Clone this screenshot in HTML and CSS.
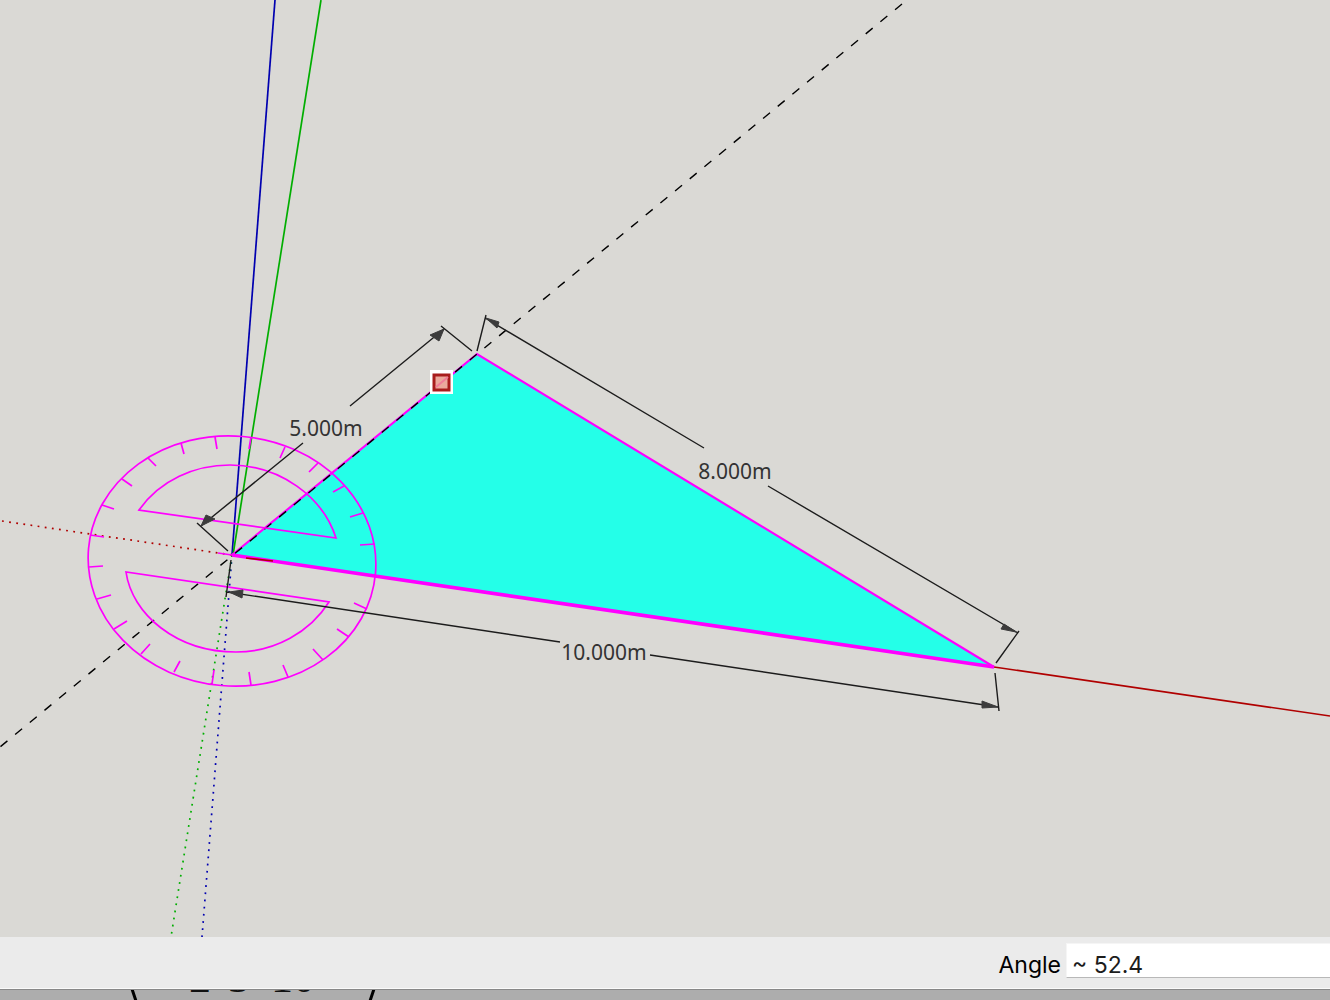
FILE: index.html
```
<!DOCTYPE html>
<html lang="en">
<head>
  <meta charset="UTF-8">
  <meta name="viewport" content="width=device-width, initial-scale=1.0">
  <title>Triangle</title>
  <link rel="stylesheet" href="styles.css">
</head>
<body>
  <main class="viewport">
    <svg class="scene" viewBox="0 0 1330 937" preserveAspectRatio="xMinYMin slice" role="img" aria-label="Triangle with sides 5, 8 and 10 metres">
      <!-- face -->
      <path class="face" d="M232 555L477 354L994 667Z"/>

      <!-- axes -->
      <path class="axis blue" d="M275 0L232 555"/>
      <path class="axis green" d="M321 0L233 555"/>
      <path class="axis red" d="M994 667L1330 716"/>
      <path class="axis blue dotted" d="M232 555L202 937"/>
      <path class="axis green dotted" d="M232 555L171 937"/>
      <path class="axis red dotted" d="M2 521L232 555"/>

      <!-- edges -->
      <path class="edge" d="M232 555L477 354L994 667"/>
      <path class="edge thick" d="M232 555L994 667"/>
      <path class="axis red" d="M246 558L273 561"/>
      <path class="guide" d="M902 4L0 747"/>

      <!-- protractor -->
      <g class="protractor">
        <ellipse cx="232" cy="561" rx="144" ry="125" transform="rotate(5 232 561)"/>
        <path d="M139 510C160 480 195 465 230 465C280 465 323 497 336 538Z"/>
        <path d="M126 572C132 614 176 652 236 652C275 652 310 632 329 602Z"/>
        <path d="M215 437L217 449M181 443L184 454M148 458L156 466M122 479L132 486M102 505L114 509M90 535L104 537M89 567L103 566M97 599L111 595M114 629L127 621M141 654L150 644M174 672L180 661M212 684L214 670M251 685L249 672M288 677L283 665M323 660L313 649M349 637L337 629M367 609L354 603M375 544L360 545M363 513L350 517M344 486L333 492M318 463L309 472M285 447L280 458M251 437L249 449"/>
        <path d="M218 553L232 555"/>
      </g>

      <!-- dimensions -->
      <g class="dimension">
        <path d="M472 351L441 326M444 329L350 406M303 443L201 526M197 523L228 551"/>
        <path d="M477 351L486 315M485 318L704 448M768 486L1018 633M1019 631L996 663"/>
        <path d="M231 560L226 597M227 592L560 642M650 655L998 707M995 673L999 711"/>
        <path class="arrow" d="M444 329L430 335L439 341ZM201 526L206 515L215 519ZM486 318L499 322L497 328ZM1016 632L1004 624L1001 629ZM229 592L243 590L242 598ZM998 707L982 701L982 708Z"/>
      </g>
      <text class="length" x="326" y="436">5.000m</text>
      <text class="length" x="735" y="479">8.000m</text>
      <text class="length" x="604" y="660">10.000m</text>

      <!-- snap marker -->
      <rect class="marker-border" x="430" y="370" width="23" height="24"/>
      <rect class="marker" x="434" y="375" width="15" height="15"/>
      <path class="marker-line" d="M436 387L448 377"/>
    </svg>
  </main>

  <footer class="status">
    <label for="angle">Angle</label>
    <input type="text" id="angle" name="angle" value="~ 52.4">
  </footer>

  <div class="behind">
    <svg class="matrix" width="400" height="11" aria-hidden="true">
      <path d="M132 -1L136 11M374 -1L370 11"/>
      <text x="200" y="2">2</text>
      <text x="239" y="2">3</text>
      <text x="293" y="2">10</text>
    </svg>
  </div>
</body>
</html>
```
FILE: styles.css
```
* {
  box-sizing: border-box;
}
body {
  display: flex;
  flex-direction: column;
  height: 100vh;
  margin: 0;
  overflow: hidden;
  font-family: Inter, "Liberation Sans", sans-serif;
}
.viewport {
  flex: 1;
  min-height: 0;
  background-color: #dad9d5;
}
.scene {
  display: block;
  width: 100%;
  height: 100%;
  fill: none;
}
.face {
  fill: #24ffe8;
}
.axis {
  stroke-width: 1.7;
}
.blue {
  stroke: #0000b0;
}
.green {
  stroke: #00ae00;
}
.red {
  stroke: #b00000;
}
.dotted {
  stroke-dasharray: 1.8 5.4;
}
.edge {
  stroke: #ff00ff;
  stroke-width: 2.2;
}
.thick {
  stroke-width: 3.6;
}
.guide {
  stroke: #000000;
  stroke-width: 1.4;
  stroke-dasharray: 9 10;
}
.protractor {
  stroke: #ff00ff;
  stroke-width: 1.7;
}
.dimension {
  stroke: #1c1c1c;
  stroke-width: 1.4;
}
.arrow {
  fill: #3c3c3c;
  stroke: #3c3c3c;
  stroke-width: 1;
}
.length {
  fill: #333333;
  font-family: "Noto Sans", "Open Sans", sans-serif;
  font-size: 21px;
  text-anchor: middle;
}
.marker-border {
  fill: #ffffff;
}
.marker {
  fill: #eba89c;
  stroke: #a81c1c;
  stroke-width: 3;
}
.marker-line {
  stroke: #f07c98;
  stroke-width: 2;
}

.status {
  display: flex;
  align-items: center;
  justify-content: flex-end;
  gap: 5px;
  height: 52px;
  padding: 4px 0 8px;
  background-color: #ebebeb;
  border-bottom: 1px solid #fafafa;
  font-size: 23px;
}
.status input {
  width: 264px;
  height: 35px;
  padding: 8px 5px 0;
  border: 1px solid #f5f5f5;
  border-right: none;
  border-bottom: 1px solid #b8b8b8;
  background-color: #ffffff;
  color: #1c1c1c;
  font: inherit;
}
.status label {
  padding-top: 8px;
}

.behind {
  height: 11px;
  border-top: 1px solid #888888;
  background-color: #adadad;
  overflow: hidden;
}
.matrix {
  display: block;
  fill: none;
  stroke: #000000;
  stroke-width: 3;
}
.matrix text {
  fill: #111111;
  stroke: none;
  font-family: "Liberation Serif", serif;
  font-size: 44px;
  text-anchor: middle;
}
```
